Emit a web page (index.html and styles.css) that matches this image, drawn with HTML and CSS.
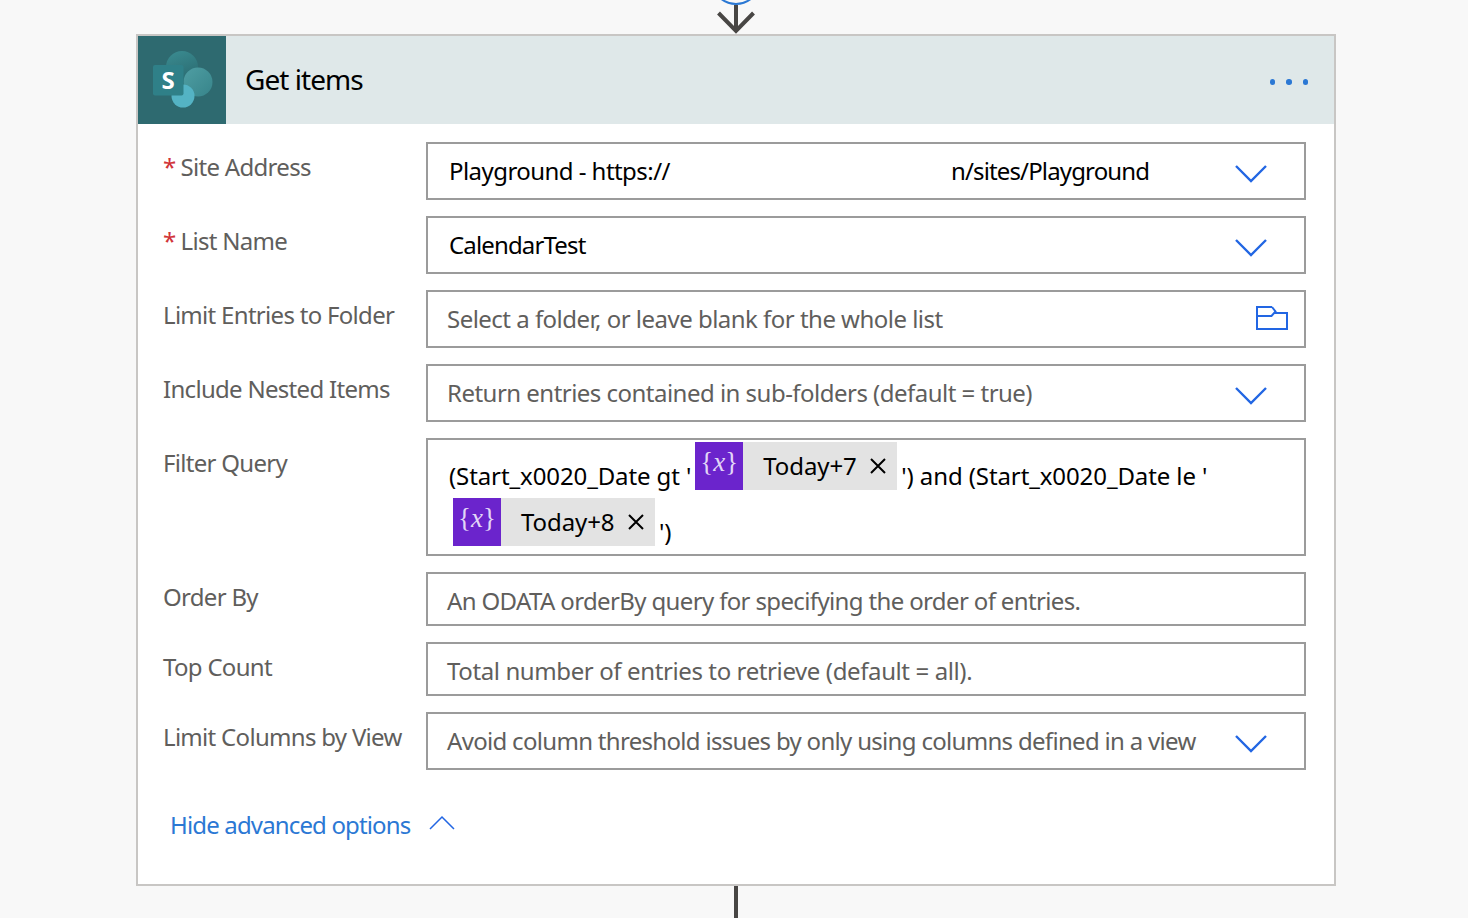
FILE: index.html
```html
<!DOCTYPE html>
<html>
<head>
    <link rel="stylesheet" href="styles.css">
</head>
<body>
    <div class="connector-top">
        <svg class="arrow" width="44" height="34" viewBox="0 0 44 34">
            <circle cx="22" cy="-20" r="24" fill="none" stroke="#2b78d4" stroke-width="2"/>
            <path d="M22 5V31M4.500 13L22 31L39.500 13" fill="none" stroke="#484644" stroke-width="4"/>
        </svg>
    </div>

    <div class="card">
        <div class="card-header">
            <div class="logo-box">
                <svg width="88" height="88" viewBox="0 0 88 88">
                    <defs>
                        <linearGradient id="topCircle" x1="0" y1="0" x2="0.4" y2="1">
                            <stop offset="0" stop-color="#3b8d92"/>
                            <stop offset="1" stop-color="#2b6c72"/>
                        </linearGradient>
                        <linearGradient id="rightCircle" x1="0" y1="0" x2="1" y2="1">
                            <stop offset="0" stop-color="#4f9ea3"/>
                            <stop offset="1" stop-color="#37848a"/>
                        </linearGradient>
                    </defs>
                    <circle cx="44" cy="31" r="16" fill="url(#topCircle)"/>
                    <circle cx="60" cy="46" r="14.500" fill="url(#rightCircle)"/>
                    <circle cx="45" cy="60" r="11.500" fill="#54b3c4"/>
                    <rect x="15" y="29" width="30.500" height="30.500" rx="2" fill="#2f8088"/>
                    <text x="30" y="52.800" class="logo-letter" text-anchor="middle">S</text>
                </svg>
            </div>
            <div class="card-title">Get items</div>
            <div class="dots"><span></span><span></span><span></span></div>
        </div>

        <div class="card-body">
            <div class="form-row">
                <label class="required">Site Address</label>
                <div class="field">
                    <span class="value site-head">Playground - https://</span>
                    <span class="value site-tail">n/sites/Playground</span>
                    <svg class="chevron" width="32" height="20" viewBox="0 0 32 20"><path d="M1 2L16 17L31 2" fill="none" stroke="#2266e3" stroke-width="2.400"/></svg>
                </div>
            </div>
            <div class="form-row">
                <label class="required">List Name</label>
                <div class="field">
                    <span class="value">CalendarTest</span>
                    <svg class="chevron" width="32" height="20" viewBox="0 0 32 20"><path d="M1 2L16 17L31 2" fill="none" stroke="#2266e3" stroke-width="2.400"/></svg>
                </div>
            </div>
            <div class="form-row">
                <label>Limit Entries to Folder</label>
                <div class="field placeholder">
                    <span>Select a folder, or leave blank for the whole list</span>
                    <svg class="folder" width="32" height="24" viewBox="0 0 32 24"><path d="M16 1H1V23H31V7H18M1 10H15.500L19.500 5.500L16 1" fill="none" stroke="#2266e3" stroke-width="2"/></svg>
                </div>
            </div>
            <div class="form-row">
                <label>Include Nested Items</label>
                <div class="field placeholder">
                    <span>Return entries contained in sub-folders (default = true)</span>
                    <svg class="chevron" width="32" height="20" viewBox="0 0 32 20"><path d="M1 2L16 17L31 2" fill="none" stroke="#2266e3" stroke-width="2.400"/></svg>
                </div>
            </div>
            <div class="form-row">
                <label>Filter Query</label>
                <div class="field-query">(Start_x0020_Date gt '<span class="token"><span class="token-icon">{<i>x</i>}</span><span class="token-name">Today+7</span><svg class="token-close" width="16" height="16" viewBox="0 0 16 16"><path d="M1 1L15 15M15 1L1 15" stroke="#000" stroke-width="2"/></svg></span>') and (Start_x0020_Date le '<span class="token"><span class="token-icon">{<i>x</i>}</span><span class="token-name">Today+8</span><svg class="token-close" width="16" height="16" viewBox="0 0 16 16"><path d="M1 1L15 15M15 1L1 15" stroke="#000" stroke-width="2"/></svg></span>')</div>
            </div>
            <div class="form-row">
                <label>Order By</label>
                <div class="field placeholder short">
                    <span class="tight">An ODATA orderBy query for specifying the order of entries.</span>
                </div>
            </div>
            <div class="form-row">
                <label>Top Count</label>
                <div class="field placeholder short">
                    <span class="loose">Total number of entries to retrieve (default = all).</span>
                </div>
            </div>
            <div class="form-row">
                <label>Limit Columns by View</label>
                <div class="field placeholder">
                    <span class="tighter">Avoid column threshold issues by only using columns defined in a view</span>
                    <svg class="chevron" width="32" height="20" viewBox="0 0 32 20"><path d="M1 2L16 17L31 2" fill="none" stroke="#2266e3" stroke-width="2.400"/></svg>
                </div>
            </div>

            <div class="advanced">
                <span>Hide advanced options</span>
                <svg class="advanced-icon" width="26" height="16" viewBox="0 0 26 16"><path d="M1 14L13 2L25 14" fill="none" stroke="#2266e3" stroke-width="1.500"/></svg>
            </div>
        </div>
    </div>

    <div class="connector-bottom"></div>
</body>
</html>
```

FILE: styles.css
```css
/* Page */
html, body {
    height: 100%;
}

body {
    box-sizing: border-box;
    margin: 0;
    padding-left: 4px;
    background-color: #f8f8f8;
    font-family: "Noto Sans", "Open Sans", sans-serif;
    overflow: hidden;
}

.connector-top {
    height: 34px;
    display: flex;
    justify-content: center;
}

.connector-bottom {
    width: 4px;
    height: 32px;
    margin: 0 auto;
    background-color: #484644;
}

/* Card */
.card {
    box-sizing: border-box;
    width: 1200px;
    height: 852px;
    margin: 0 auto;
    background-color: #fff;
    border: 2px solid #c8c6c4;
}

.card-header {
    display: flex;
    align-items: center;
    height: 88px;
    background-color: #dfe8e9;
}

.logo-box {
    width: 88px;
    height: 88px;
    background-color: #2e6a70;
}

.logo-letter {
    font-family: "Noto Sans", sans-serif;
    font-size: 24px;
    font-weight: 700;
    fill: #fff;
}

.card-title {
    margin-left: 19px;
    margin-bottom: 2px;
    font-size: 28px;
    letter-spacing: -0.95px;
    color: #000;
}

.dots {
    display: flex;
    gap: 11px;
    margin-left: auto;
    margin-right: 26px;
    margin-top: 4px;
}

.dots span {
    width: 5.500px;
    height: 5.500px;
    border-radius: 50%;
    background-color: #2b78d4;
}

.card-body {
    padding: 18px 28px 0 25px;
    display: flex;
    flex-direction: column;
    gap: 16px;
}

/* Rows */
.form-row {
    display: flex;
}

label {
    width: 263px;
    flex-shrink: 0;
    padding-top: 8px;
    font-size: 24px;
    line-height: 33px;
    letter-spacing: -0.7px;
    color: #605e5c;
    white-space: nowrap;
}

label.required::before {
    content: "*";
    margin-right: 5px;
    color: #d13438;
}

.field {
    box-sizing: border-box;
    flex: 1;
    height: 58px;
    display: flex;
    align-items: center;
    padding: 0 37px 2px 19px;
    border: 2px solid #9b9b9b;
    font-size: 24px;
    letter-spacing: -0.52px;
    white-space: nowrap;
}

.field.short {
    height: 54px;
    padding-top: 2px;
    padding-bottom: 0;
}

.field.placeholder {
    color: #605e5c;
}

/* placeholders differ a little in width, so spacing is set per text */
.tight {
    letter-spacing: -0.64px;
}

.tighter {
    letter-spacing: -0.69px;
}

.loose {
    letter-spacing: -0.39px;
}

.value {
    margin-left: 2px;
    letter-spacing: -0.85px;
    color: #000;
}

.site-head {
    letter-spacing: -0.55px;
}

.site-tail {
    margin-left: 281px;
}

.chevron {
    margin-left: auto;
    margin-top: 8px;
}

.folder {
    margin-left: auto;
    margin-right: -21px;
}

/* Filter query */
.field-query {
    box-sizing: border-box;
    flex: 1;
    height: 118px;
    padding: 8px 20px 0 21px;
    border: 2px solid #9b9b9b;
    font-size: 24px;
    line-height: 56px;
    letter-spacing: -0.1px;
    color: #000;
}

.token {
    display: inline-flex;
    align-items: center;
    width: 202px;
    height: 48px;
    margin: -12px 4px;
    vertical-align: 14px;
    background-color: #e3e3e3;
    line-height: 48px;
}

.token-icon {
    width: 48px;
    height: 48px;
    flex-shrink: 0;
    text-align: center;
    line-height: 41px;
    font-family: "Liberation Serif", serif;
    font-size: 27px;
    letter-spacing: 0;
    color: #e2d6f7;
    background-color: #6b24cc;
}

.token-name {
    margin-left: 20px;
}

.token-close {
    margin-left: auto;
    margin-right: 11px;
}

/* Link */
.advanced {
    display: flex;
    align-items: center;
    gap: 19px;
    margin-top: 22px;
    margin-left: 7px;
    font-size: 24px;
    line-height: 33px;
    letter-spacing: -0.85px;
    color: #2b78d4;
}

.advanced-icon {
    margin-top: -4px;
}
```
